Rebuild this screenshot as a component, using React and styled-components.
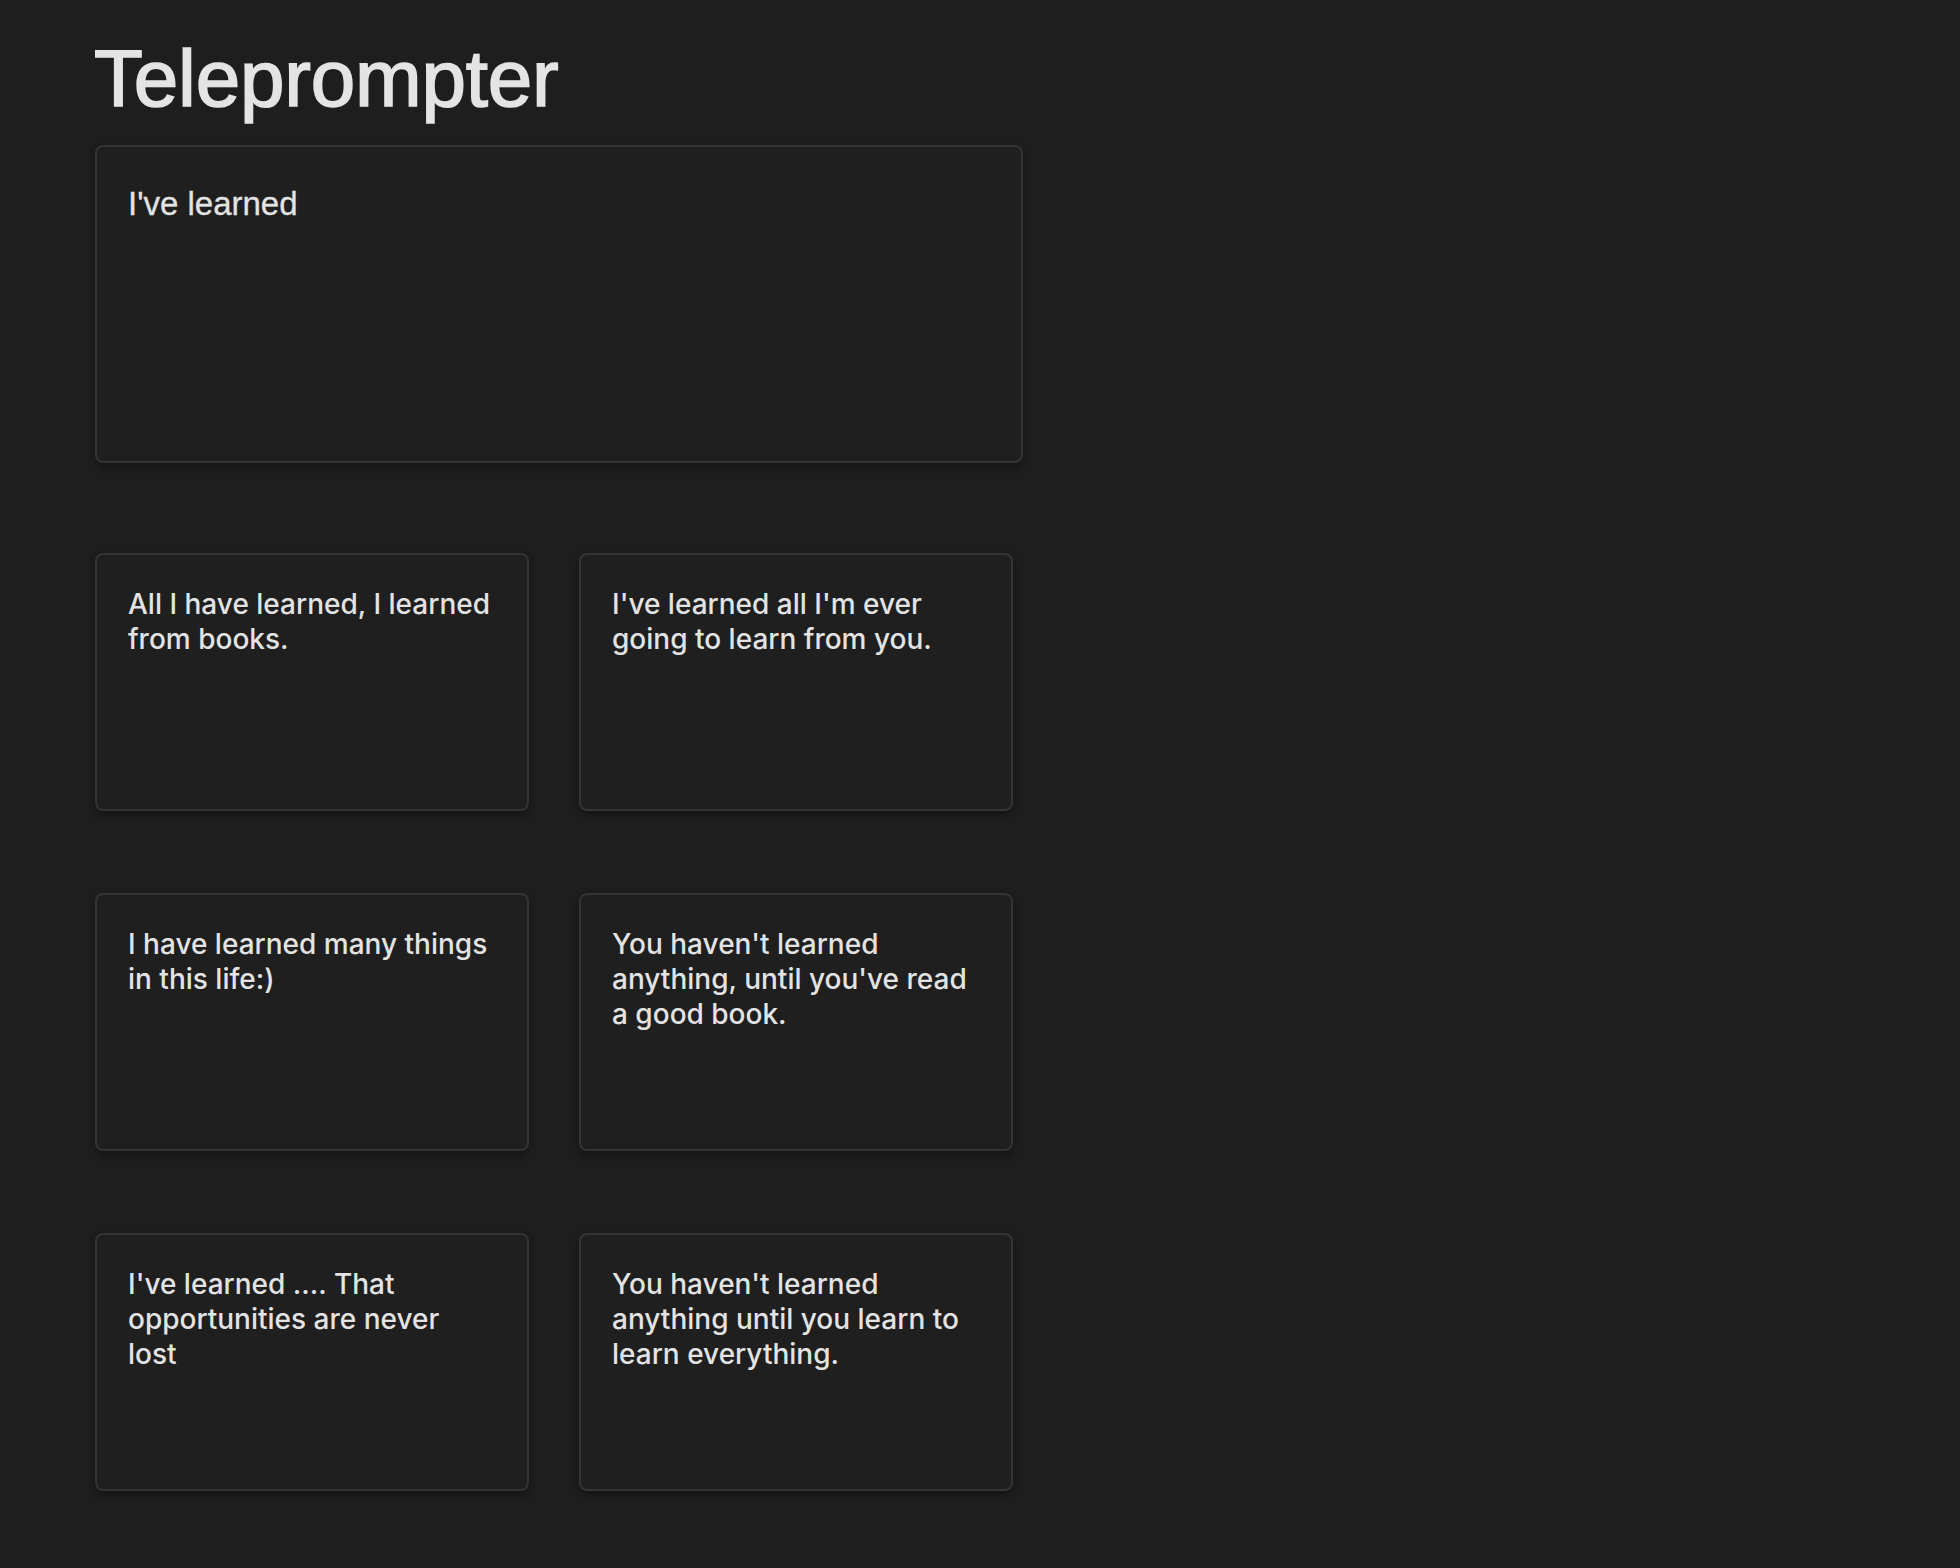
import React from "react";
import styled, { createGlobalStyle } from "styled-components";

const quotes = [
  "All I have learned, I learned from books.",
  "I've learned all I'm ever going to learn from you.",
  "I have learned many things in this life:)",
  "You haven't learned anything, until you've read a good book.",
  "I've learned .... That opportunities are never lost",
  "You haven't learned anything until you learn to learn everything.",
];

export default function App() {
  return (
    <>
      <GlobalStyle />
      <Page>
        <Title>Teleprompter</Title>
        <Editor>I've learned</Editor>
        <QuoteGrid>
          {quotes.map((q, i) => (
            <QuoteCard key={i}>{q}</QuoteCard>
          ))}
        </QuoteGrid>
      </Page>
    </>
  );
}

const GlobalStyle = createGlobalStyle`
  html, body {
    margin: 0;
    background: #1e1e1e;
  }
  body {
    min-height: 1568px;
    font-family: Inter, "Liberation Sans", sans-serif;
  }
`;

const Page = styled.main`
  padding: 34px 0 60px 95px;
  width: 928px;
`;

const Title = styled.h1`
  margin: 0 0 22px -1px;
  font-family: "Liberation Sans", Arial, sans-serif;
  font-weight: 400;
  font-size: 80px;
  line-height: 89px;
  letter-spacing: -0.2px;
  color: #e4e4e4;
  -webkit-text-stroke: 1.6px #e4e4e4;
`;

const Card = styled.div`
  box-sizing: border-box;
  background: #1f1f1f;
  border: 2px solid #343434;
  border-radius: 8px;
  box-shadow: 0 4px 10px rgba(0, 0, 0, 0.35);
  color: #e3e3e3;
`;

const Editor = styled(Card)`
  height: 318px;
  padding: 38px 31px;
  font-family: "Liberation Sans", Arial, sans-serif;
  font-size: 33px;
  line-height: 38px;
  -webkit-text-stroke: 0.3px #e3e3e3;
`;

const QuoteGrid = styled.section`
  margin-top: 90px;
  display: grid;
  grid-template-columns: 434px 434px;
  grid-auto-rows: 258px;
  column-gap: 50px;
  row-gap: 82px;
`;

const QuoteCard = styled(Card)`
  padding: 32px 34px 32px 31px;
  font-family: Inter, "Liberation Sans", sans-serif;
  font-weight: 500;
  font-size: 28px;
  line-height: 35px;
`;
